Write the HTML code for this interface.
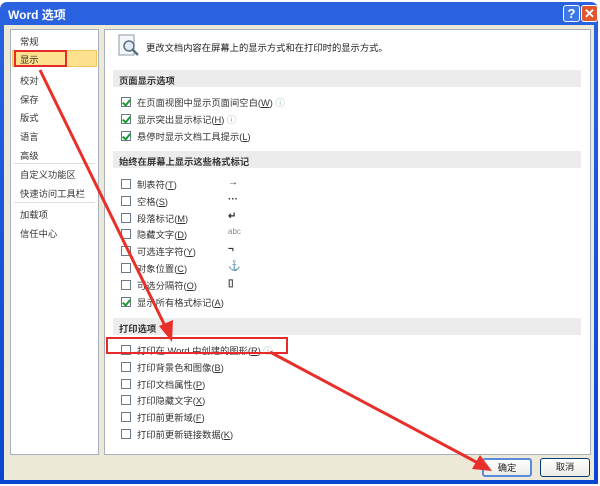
<!DOCTYPE html>
<html><head><meta charset="utf-8"><style>
*{margin:0;padding:0;box-sizing:border-box}
body{width:600px;height:486px;background:#fff;position:relative;overflow:hidden;font-family:"Liberation Sans","Noto Sans CJK SC",sans-serif;font-size:9px;color:#222}
.abs{position:absolute}
.win{left:0;top:2px;width:598px;height:482px;background:linear-gradient(#2a63e0,#0a46d0);border-radius:7px 7px 0 0}
.body{left:4px;top:25px;width:590px;height:455px;background:#ece9d8}
.title{left:8px;top:6px;color:#fff;font-weight:bold;font-size:12px}
.lp{left:10px;top:29px;width:89px;height:426px;background:#fff;border:1px solid #a8b0bc}
.rp{left:104px;top:29px;width:487px;height:426px;background:#fff;border:1px solid #a8b0bc}
.li{position:absolute;left:9px;font-size:9.3px;color:#333}
.sec{position:absolute;left:8px;width:468px;height:17px;background:#ececec;font-weight:bold;font-size:9.3px;padding:3px 0 0 6px;color:#333}
.row{position:absolute;left:16px;font-size:9.3px;color:#333;white-space:nowrap}
.cb{display:inline-block;width:10px;height:10px;border:1px solid #6a7a8a;vertical-align:-1px;margin-right:6px;background:#fff;position:relative}
.ck::after{content:"";position:absolute;left:2px;top:0px;width:3px;height:6px;border:solid #1a9a30;border-width:0 2px 2px 0;transform:rotate(40deg)}
.sym{position:absolute;left:107px;font-size:10px;font-weight:bold}
.btn{top:458px;width:50px;height:19px;border:1px solid #003c74;border-radius:3px;background:linear-gradient(#fff,#ecebe6);text-align:center;font-size:9.3px;line-height:17px}
</style></head><body>
<div class="abs win"></div>
<div class="abs title">Word 选项</div>
<div class="abs" style="left:563px;top:5px;width:17px;height:17px;background:#3d78e6;border:1px solid #fff;border-radius:3px;color:#fff;font-weight:bold;text-align:center;font-size:13px;line-height:15px">?</div>
<div class="abs" style="left:581px;top:5px;width:17px;height:17px;background:#e0562d;border:1px solid #fff;border-radius:3px;color:#fff;font-weight:bold;text-align:center;font-size:13px;line-height:15px">✕</div>
<div class="abs body"></div>
<div class="abs lp">
<div class="abs" style="left:1px;top:20px;width:85px;height:17px;background:#fde18f;border:1px solid #f2c561"></div>
<div class="li" style="top:4px">常规</div>
<div class="li" style="top:22px">显示</div>
<div class="li" style="top:43px">校对</div>
<div class="li" style="top:62px">保存</div>
<div class="li" style="top:80px">版式</div>
<div class="li" style="top:99px">语言</div>
<div class="li" style="top:118px">高级</div>
<div class="abs" style="left:3px;top:133px;width:81px;border-top:1px solid #ddd"></div>
<div class="li" style="top:137px">自定义功能区</div>
<div class="li" style="top:156px">快速访问工具栏</div>
<div class="abs" style="left:3px;top:172px;width:81px;border-top:1px solid #ddd"></div>
<div class="li" style="top:177px">加载项</div>
<div class="li" style="top:196px">信任中心</div>
</div>
<div class="abs rp">
<svg class="abs" style="left:12px;top:4px" width="24" height="24"><rect x="2" y="1" width="15" height="20" fill="#f4f6f8" stroke="#8a98a8"/><circle cx="12" cy="12" r="5" fill="#dfe9f4" stroke="#5a6f86" stroke-width="1.5"/><line x1="15.5" y1="15.5" x2="21" y2="21" stroke="#5a6f86" stroke-width="2.5"/></svg>
<div class="abs" style="left:41px;top:10px;font-size:9.3px">更改文档内容在屏幕上的显示方式和在打印时的显示方式。</div>
<div class="sec" style="top:40px">页面显示选项</div>
<div class="row" style="top:65px"><span class="cb ck"></span>在页面视图中显示页面间空白(<u>W</u>) <span style="color:#8aa">ⓘ</span></div>
<div class="row" style="top:82px"><span class="cb ck"></span>显示突出显示标记(<u>H</u>) <span style="color:#8aa">ⓘ</span></div>
<div class="row" style="top:99px"><span class="cb ck"></span>悬停时显示文档工具提示(<u>L</u>)</div>
<div class="sec" style="top:121px">始终在屏幕上显示这些格式标记</div>
<div class="row" style="top:147px"><span class="cb"></span>制表符(<u>T</u>)<span class="sym">→</span></div>
<div class="row" style="top:164px"><span class="cb"></span>空格(<u>S</u>)<span class="sym">···</span></div>
<div class="row" style="top:181px"><span class="cb"></span>段落标记(<u>M</u>)<span class="sym">↵</span></div>
<div class="row" style="top:197px"><span class="cb"></span>隐藏文字(<u>D</u>)<span class="sym" style="color:#888;font-weight:normal;font-size:8px">abc</span></div>
<div class="row" style="top:214px"><span class="cb"></span>可选连字符(<u>Y</u>)<span class="sym">¬</span></div>
<div class="row" style="top:231px"><span class="cb"></span>对象位置(<u>C</u>)<span class="sym">⚓</span></div>
<div class="row" style="top:248px"><span class="cb"></span>可选分隔符(<u>O</u>)<span class="sym">▯</span></div>
<div class="row" style="top:265px"><span class="cb ck"></span>显示所有格式标记(<u>A</u>)</div>
<div class="sec" style="top:288px">打印选项</div>
<div class="row" style="top:313px"><span class="cb"></span>打印在 Word 中创建的图形(<u>R</u>) <span style="color:#8aa">ⓘ</span></div>
<div class="row" style="top:330px"><span class="cb"></span>打印背景色和图像(<u>B</u>)</div>
<div class="row" style="top:347px"><span class="cb"></span>打印文档属性(<u>P</u>)</div>
<div class="row" style="top:363px"><span class="cb"></span>打印隐藏文字(<u>X</u>)</div>
<div class="row" style="top:380px"><span class="cb"></span>打印前更新域(<u>F</u>)</div>
<div class="row" style="top:397px"><span class="cb"></span>打印前更新链接数据(<u>K</u>)</div>
</div>
<div class="abs btn" style="left:482px;border:2px solid #5a8ae0">确定</div>
<div class="abs btn" style="left:540px">取消</div>
<div class="abs" style="left:14px;top:50px;width:53px;height:17px;border:2px solid #e52a2a"></div>
<div class="abs" style="left:106px;top:337px;width:182px;height:17px;border:2px solid #e52a2a"></div>
<svg class="abs" style="left:0;top:0" width="600" height="486">
<line x1="40" y1="70" x2="166" y2="328" stroke="#e8302a" stroke-width="3"/>
<polygon points="172,342 159,326 173,320" fill="#e8302a"/>
<line x1="270" y1="352" x2="478" y2="463" stroke="#e8302a" stroke-width="3"/>
<polygon points="492,471 472,469 480,455" fill="#e8302a"/>
</svg>
</body></html>
